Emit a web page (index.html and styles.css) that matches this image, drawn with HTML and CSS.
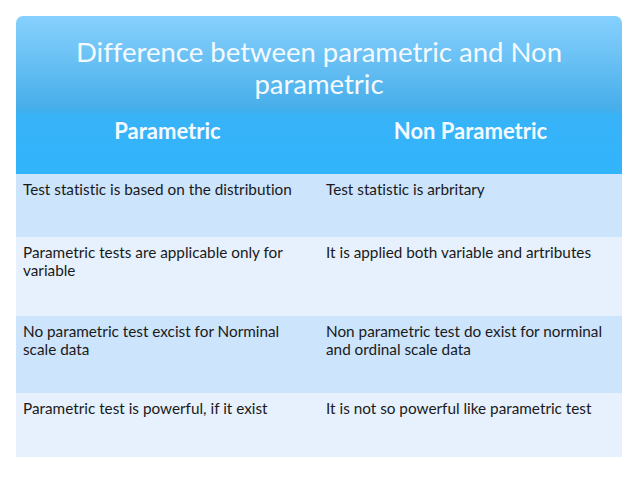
FILE: index.html
```html
<!DOCTYPE html>
<html>
<head>
<meta charset="utf-8">
<link rel="stylesheet" href="styles.css">
</head>
<body>
<div class="slide">
  <div class="head">
    <h1 class="title">Difference between parametric and Non<br>parametric</h1>
    <div class="cols">
      <div class="col-h">Parametric</div>
      <div class="col-h">Non Parametric</div>
    </div>
  </div>
  <div class="row r1 dark">
    <div class="cell">Test statistic is based on the distribution</div>
    <div class="cell">Test statistic is arbritary</div>
  </div>
  <div class="row r2 light">
    <div class="cell">Parametric tests are applicable only for variable</div>
    <div class="cell">It is applied both variable and artributes</div>
  </div>
  <div class="row r3 dark">
    <div class="cell">No parametric test excist for Norminal scale data</div>
    <div class="cell">Non parametric test do exist for norminal and ordinal scale data</div>
  </div>
  <div class="row r4 light">
    <div class="cell">Parametric test is powerful, if it exist</div>
    <div class="cell">It is not so powerful like parametric test</div>
  </div>
</div>
</body>
</html>
```

FILE: styles.css
```css
* { box-sizing: border-box; }
html, body { margin: 0; padding: 0; background: #ffffff; }
body {
  font-family: Lato, "Open Sans", sans-serif;
  font-variant-ligatures: none;
}
.slide {
  margin: 16px 0 0 16px;
  width: 606px;
}
.head {
  height: 158px;
  border-radius: 7px 7px 0 0;
  background: linear-gradient(180deg, #86d0fd 0px, #6cc2f5 40px, #47aeea 92px, #38b3f8 100px, #31b4fb 158px);
  padding-top: 20px;
  color: #f4faff;
}
.title {
  margin: 0;
  font-weight: 400;
  font-size: 27.5px;
  line-height: 32px;
  text-align: center;
}
.cols {
  display: grid;
  grid-template-columns: 303px 303px;
  margin-top: 18px;
}
.col-h {
  text-align: center;
  font-weight: 700;
  font-size: 22px;
  line-height: 26px;
}
.row {
  display: grid;
  grid-template-columns: 303px 303px;
  color: #1a1a1a;
  font-size: 15.3px;
  line-height: 18px;
}
.dark { background: #cce4fc; }
.light { background: #e6f1fd; }
.r1 { height: 63px; }
.r2 { height: 79px; }
.r3 { height: 77px; }
.r4 { height: 64px; }
.cell { padding: 6px 16px 0 7px; }
```
